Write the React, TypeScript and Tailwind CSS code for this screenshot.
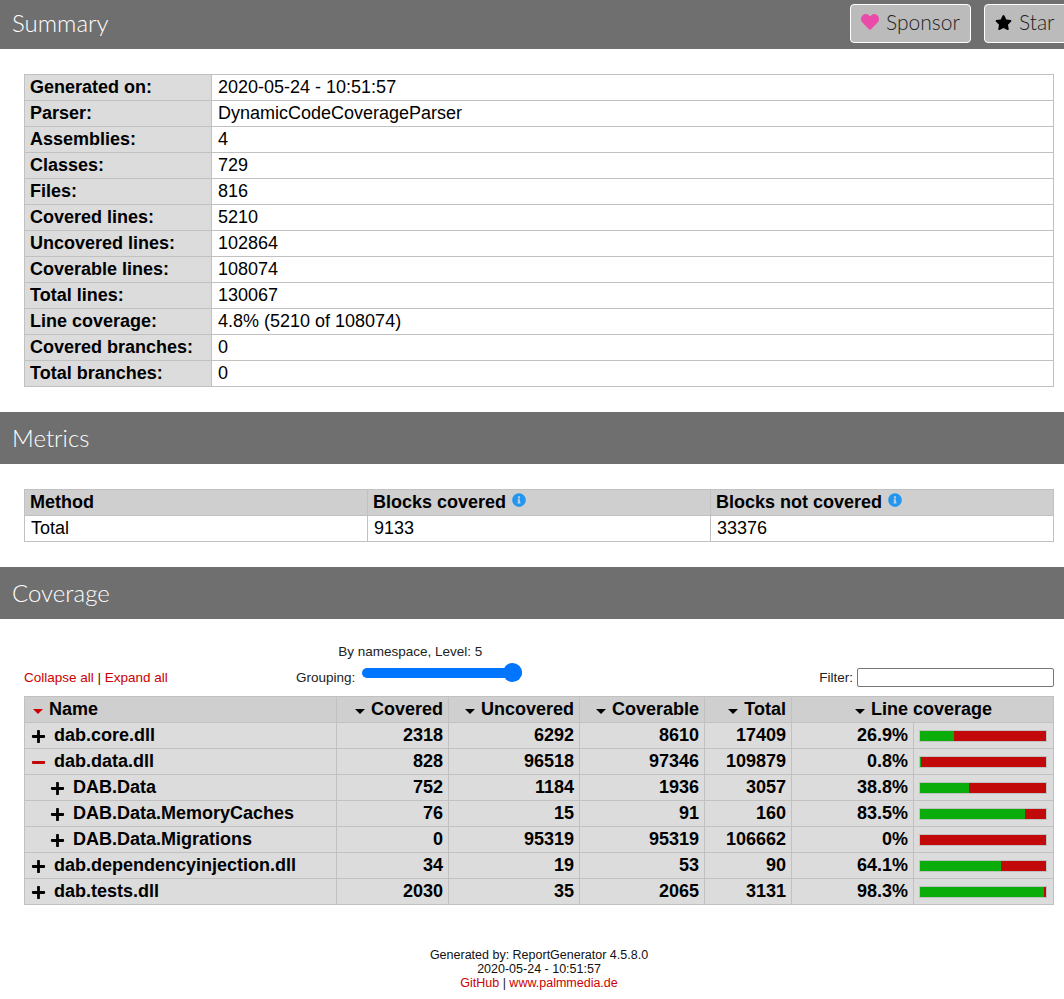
import { FaHeart, FaStar, FaInfoCircle, FaPlus, FaMinus } from "react-icons/fa";

const summary = [
  ["Generated on:", "2020-05-24 - 10:51:57"],
  ["Parser:", "DynamicCodeCoverageParser"],
  ["Assemblies:", "4"],
  ["Classes:", "729"],
  ["Files:", "816"],
  ["Covered lines:", "5210"],
  ["Uncovered lines:", "102864"],
  ["Coverable lines:", "108074"],
  ["Total lines:", "130067"],
  ["Line coverage:", "4.8% (5210 of 108074)"],
  ["Covered branches:", "0"],
  ["Total branches:", "0"],
];

const rows = [
  { name: "dab.core.dll", sub: false, open: false, covered: 2318, uncovered: 6292, coverable: 8610, total: 17409, pct: "26.9%", bar: 26.9 },
  { name: "dab.data.dll", sub: false, open: true, covered: 828, uncovered: 96518, coverable: 97346, total: 109879, pct: "0.8%", bar: 0.8 },
  { name: "DAB.Data", sub: true, open: false, covered: 752, uncovered: 1184, coverable: 1936, total: 3057, pct: "38.8%", bar: 38.8 },
  { name: "DAB.Data.MemoryCaches", sub: true, open: false, covered: 76, uncovered: 15, coverable: 91, total: 160, pct: "83.5%", bar: 83.5 },
  { name: "DAB.Data.Migrations", sub: true, open: false, covered: 0, uncovered: 95319, coverable: 95319, total: 106662, pct: "0%", bar: 0 },
  { name: "dab.dependencyinjection.dll", sub: false, open: false, covered: 34, uncovered: 19, coverable: 53, total: 90, pct: "64.1%", bar: 64.1 },
  { name: "dab.tests.dll", sub: false, open: false, covered: 2030, uncovered: 35, coverable: 2065, total: 3131, pct: "98.3%", bar: 98.3 },
];

const box = "border border-[#c1c1c1] h-[26px] leading-none";
const cell = `${box} pt-0 pb-[2px] px-[5px]`;
const num = `${cell} text-right font-bold bg-[#dcdcdc]`;

function Caret({ red }: { red?: boolean }) {
  return (
    <svg viewBox="0 0 10 5" className="inline-block w-[10px] h-[5px] mr-[6px] align-[1px]">
      <path d="M0 0h10L5 5z" fill={red ? "#c00" : "#000"} />
    </svg>
  );
}

function Section({ title }: { title: string }) {
  return (
    <h1 className="h-[52px] bg-[#6f6f6f] text-white flex items-center pl-[12px] text-[24px] font-light font-['Lato',sans-serif]">
      {title}
    </h1>
  );
}

function HeadCell({ label, red, left }: { label: string; red?: boolean; left?: boolean }) {
  return (
    <th className={`${cell} bg-[#cfcfcf] font-bold ${left ? "text-left" : "text-right"}`}>
      <span className={left ? "pl-[3px]" : ""}>
        <Caret red={red} />
        {label}
      </span>
    </th>
  );
}

export default function App() {
  return (
    <div className="w-[1064px] h-[999px] overflow-hidden bg-white text-black text-[18px] font-['Liberation_Sans',Arial,sans-serif]">
      <h1 className="h-[49px] pb-[3px] bg-[#6f6f6f] text-white flex items-center pl-[12px] text-[24px] font-light font-['Lato',sans-serif] overflow-hidden">
        Summary
        <div className="ml-auto flex gap-[13px] mr-[-20px]">
          <a className="flex items-center gap-[7px] w-[121px] h-[39px] pb-[2px] pl-[10px] bg-[#bbbbbb] text-[#222] border border-white rounded-[4px] text-[21px]">
            <FaHeart className="text-[#ea4aaa] w-[18px] h-[18px]" /> Sponsor
          </a>
          <a className="flex items-center gap-[7px] w-[100px] h-[39px] pb-[2px] pl-[10px] bg-[#bbbbbb] text-[#222] border border-white rounded-[4px] text-[21px]">
            <FaStar className="text-black w-[17px] h-[17px]" /> Star
          </a>
        </div>
      </h1>

      <div className="pt-[25px] pb-[25px] pl-[24px] pr-[10px]">
        <table className="w-full table-fixed border-collapse">
          <colgroup>
            <col className="w-[187px]" />
            <col />
          </colgroup>
          <tbody>
            {summary.map(([k, v]) => (
              <tr key={k}>
                <th className={`${cell} bg-[#dcdcdc] text-left font-bold`}>{k}</th>
                <td className={`${cell} px-[6px]`}>{v}</td>
              </tr>
            ))}
          </tbody>
        </table>
      </div>

      <Section title="Metrics" />
      <div className="pt-[25px] pb-[25px] pl-[24px] pr-[10px]">
        <table className="w-full table-fixed border-collapse">
          <thead>
            <tr>
              <th className={`${cell} bg-[#cfcfcf] text-left font-bold`}>Method</th>
              <th className={`${cell} bg-[#cfcfcf] text-left font-bold`}>
                <span className="flex items-center gap-[6px]">
                  Blocks covered <FaInfoCircle className="text-[#2196f3] w-[14px] h-[14px] mb-[4px]" />
                </span>
              </th>
              <th className={`${cell} bg-[#cfcfcf] text-left font-bold`}>
                <span className="flex items-center gap-[6px]">
                  Blocks not covered <FaInfoCircle className="text-[#2196f3] w-[14px] h-[14px] mb-[4px]" />
                </span>
              </th>
            </tr>
          </thead>
          <tbody>
            <tr>
              <td className={`${cell} px-[6px]`}>Total</td>
              <td className={`${cell} px-[6px]`}>9133</td>
              <td className={`${cell} px-[6px]`}>33376</td>
            </tr>
          </tbody>
        </table>
      </div>

      <Section title="Coverage" />
      <div className="pl-[24px] pr-[10px]">
        <div className="flex items-end h-[77px] pb-[12px] text-[13.5px] leading-none">
          <div className="w-[272px] text-[#c00]">
            Collapse all <span className="text-[#222]">|</span> Expand all
          </div>
          <div className="text-[#222]">Grouping:</div>
          <div className="ml-[7px] w-[160px] relative mb-[6px]">
            <div className="absolute bottom-[20px] left-[-24px] whitespace-nowrap text-[#222]">By namespace, Level: 5</div>
            <div className="h-[10px] rounded-full bg-[#0075ff] relative">
              <div className="absolute right-0 top-[-5px] w-[19px] h-[19px] rounded-full bg-[#0075ff]" />
            </div>
          </div>
          <div className="ml-auto mb-[-3px] flex items-center gap-[4px] text-[#222]">
            Filter:
            <input className="w-[197px] h-[19px] border border-[#767676] rounded-[2px] bg-white" />
          </div>
        </div>
        <table className="w-full table-fixed border-collapse">
          <colgroup>
            <col className="w-[312px]" />
            <col className="w-[112px]" />
            <col className="w-[131px]" />
            <col className="w-[125px]" />
            <col className="w-[87px]" />
            <col className="w-[122px]" />
            <col />
          </colgroup>
          <thead>
            <tr>
              <HeadCell label="Name" red left />
              <HeadCell label="Covered" />
              <HeadCell label="Uncovered" />
              <HeadCell label="Coverable" />
              <HeadCell label="Total" />
              <th colSpan={2} className={`${cell} bg-[#cfcfcf] font-bold text-center`}>
                <span className="pl-[2px]">
                  <Caret />
                  Line coverage
                </span>
              </th>
            </tr>
          </thead>
          <tbody>
            {rows.map((r) => (
              <tr key={r.name}>
                <th className={`${cell} bg-[#dcdcdc] text-left font-bold`}>
                  <span className={`flex items-center gap-[8px] ${r.sub ? "pl-[20px]" : "pl-[1px]"}`}>
                    {r.open ? <FaMinus className="text-[#c10909] w-[15px] h-[15px] mt-[4px]" /> : <FaPlus className="w-[15px] h-[15px] mt-[4px]" />}
                    {r.name}
                  </span>
                </th>
                <td className={num}>{r.covered}</td>
                <td className={num}>{r.uncovered}</td>
                <td className={num}>{r.coverable}</td>
                <td className={num}>{r.total}</td>
                <td className={num}>{r.pct}</td>
                <td className={`${box} p-0 px-[5px] bg-[#dcdcdc]`}>
                  <div className="flex h-[12px] mr-[1px] border border-[#c1c1c1] bg-[#c10909]">
                    <div className="bg-[#0aad0a] h-full" style={{ width: `${r.bar}%` }} />
                  </div>
                </td>
              </tr>
            ))}
          </tbody>
        </table>
      </div>

      <div className="mt-[43px] text-center text-[12.5px] leading-[14px] text-[#111] pl-[14px]">
        <div>Generated by: ReportGenerator 4.5.8.0</div>
        <div>2020-05-24 - 10:51:57</div>
        <div className="text-[#c00]">
          GitHub <span className="text-[#222]">|</span> www.palmmedia.de
        </div>
      </div>
    </div>
  );
}
